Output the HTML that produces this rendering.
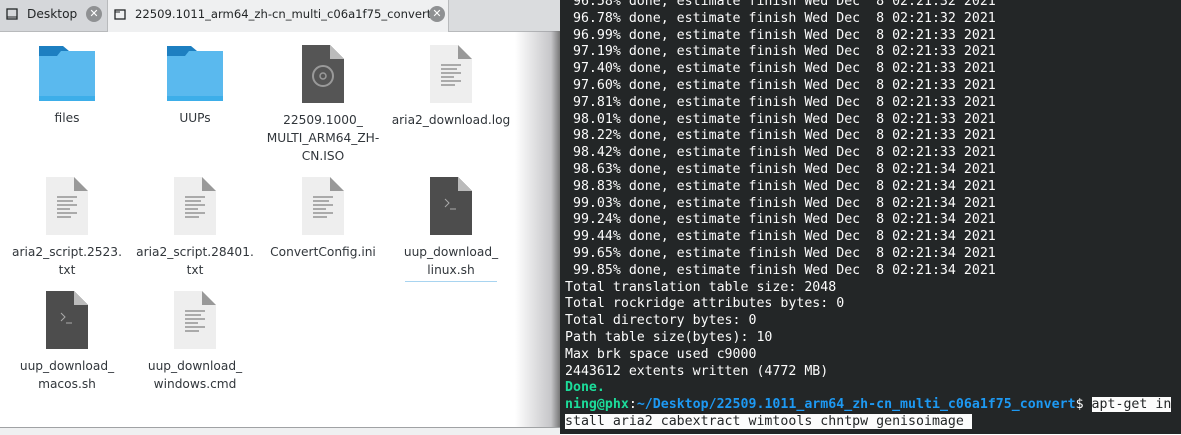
<!DOCTYPE html>
<html><head><meta charset="utf-8"><style>
body{margin:0;width:1181px;height:434px;overflow:hidden;position:relative;background:#fff;font-family:"DejaVu Sans","Liberation Sans",sans-serif}
#fm{position:absolute;left:0;top:0;width:560px;height:434px;background:#fff}
#tabs{position:absolute;left:0;top:0;width:560px;height:31px;background:#dadcde;border-bottom:1px solid #b8babc}
.tab{position:absolute;top:0;height:31px;font-size:12.2px;color:#232627;line-height:29px;white-space:nowrap}
.x{position:absolute;top:6px;width:16px;height:16px;border-radius:50%;background:#8f9193;color:#fff;font-size:11px;line-height:16px;text-align:center}
#shade{position:absolute;left:515px;top:31px;width:45px;height:396px;background:linear-gradient(90deg,rgba(255,255,255,0),rgba(160,160,165,.6) 80%,#777 100%)}
.it{position:absolute;width:128px;text-align:center;font-size:12.2px;color:#31363b;line-height:18px;white-space:nowrap}
.it svg{display:block;margin:0 auto 8px}
#term{position:absolute;left:560px;top:0;width:621px;height:434px;background:#232627;font-family:"DejaVu Sans Mono","Liberation Mono",monospace;font-size:13.25px;color:#fcfcfc;white-space:pre;line-height:16.8px}
#tt{position:absolute;left:5px;top:-6px}
.g{color:#1cdc9a;font-weight:bold}.b{color:#1d99f3;font-weight:bold}
.sel{background:#fcfcfc;color:#232627}
#bot{position:absolute;left:0;top:427px;width:560px;height:7px;background:#eff0f1;border-top:1px solid #a0a2a4}
</style></head><body>
<div id="fm">
<div id="tabs">
<div class="tab" style="left:0;width:107px;background:#d5d7da">
<svg style="position:absolute;left:6px;top:8px" width="12" height="12"><rect x="1" y="1" width="10" height="10" fill="none" stroke="#232627" stroke-width="1.3"/><line x1="1" y1="9" x2="11" y2="9" stroke="#232627"/></svg>
<span style="position:absolute;left:27px">Desktop</span><div class="x" style="left:86px">✕</div></div>
<div class="tab" style="left:107px;width:340px;background:#eff0f1;border-left:1px solid #b8babc;border-right:1px solid #b8babc;height:32px">
<svg style="position:absolute;left:6px;top:9px" width="12" height="11"><rect x="1" y="1" width="10" height="9" fill="none" stroke="#232627" stroke-width="1.3"/><line x1="1" y1="3" x2="6" y2="3" stroke="#232627"/></svg>
<span style="position:absolute;left:27px;font-size:11.6px">22509.1011_arm64_zh-cn_multi_c06a1f75_convert</span><div class="x" style="left:321px">✕</div></div>
</div>
<div id="shade"></div>

<div class="it" style="left:3px;top:46px"><svg width="56" height="55"><path d="M0 0h24l6 5h26v50H0z" fill="#1d7fc1"/><path d="M0 10h18l4-5h34v50H0z" fill="#5ab9ee"/><rect y="50" width="56" height="5" fill="#3daee9"/></svg>files</div>
<div class="it" style="left:131px;top:46px"><svg width="56" height="55"><path d="M0 0h24l6 5h26v50H0z" fill="#1d7fc1"/><path d="M0 10h18l4-5h34v50H0z" fill="#5ab9ee"/><rect y="50" width="56" height="5" fill="#3daee9"/></svg>UUPs</div>
<div class="it" style="left:259px;top:45px"><svg width="42" height="58"><path d="M0 0h28l14 14v44H0z" fill="#555"/><path d="M28 0l14 14H28z" fill="#bbb"/><circle cx="21" cy="31" r="10" fill="none" stroke="#999" stroke-width="2"/><circle cx="21" cy="31" r="3" fill="none" stroke="#999" stroke-width="1.5"/></svg>22509.1000_<br>MULTI_ARM64_ZH-<br>CN.ISO</div>
<div class="it" style="left:387px;top:45px"><svg width="42" height="58"><path d="M0 0h28l14 14v44H0z" fill="#eee"/><path d="M28 0l14 14H28z" fill="#999"/><g stroke="#666"><line x1="11" y1="20" x2="31" y2="20"/><line x1="11" y1="24" x2="27" y2="24"/><line x1="11" y1="28" x2="31" y2="28"/><line x1="11" y1="32" x2="24" y2="32"/><line x1="11" y1="36" x2="31" y2="36"/><line x1="11" y1="40" x2="25" y2="40"/></g></svg>aria2_download.log</div>

<div class="it" style="left:3px;top:177px"><svg width="42" height="58"><path d="M0 0h28l14 14v44H0z" fill="#eee"/><path d="M28 0l14 14H28z" fill="#999"/><g stroke="#666"><line x1="11" y1="20" x2="31" y2="20"/><line x1="11" y1="24" x2="27" y2="24"/><line x1="11" y1="28" x2="31" y2="28"/><line x1="11" y1="32" x2="24" y2="32"/><line x1="11" y1="36" x2="31" y2="36"/><line x1="11" y1="40" x2="25" y2="40"/></g></svg>aria2_script.2523.<br>txt</div>
<div class="it" style="left:131px;top:177px"><svg width="42" height="58"><path d="M0 0h28l14 14v44H0z" fill="#eee"/><path d="M28 0l14 14H28z" fill="#999"/><g stroke="#666"><line x1="11" y1="20" x2="31" y2="20"/><line x1="11" y1="24" x2="27" y2="24"/><line x1="11" y1="28" x2="31" y2="28"/><line x1="11" y1="32" x2="24" y2="32"/><line x1="11" y1="36" x2="31" y2="36"/><line x1="11" y1="40" x2="25" y2="40"/></g></svg>aria2_script.28401.<br>txt</div>
<div class="it" style="left:259px;top:177px"><svg width="42" height="58"><path d="M0 0h28l14 14v44H0z" fill="#eee"/><path d="M28 0l14 14H28z" fill="#999"/><g stroke="#666"><line x1="11" y1="20" x2="31" y2="20"/><line x1="11" y1="24" x2="27" y2="24"/><line x1="11" y1="28" x2="31" y2="28"/><line x1="11" y1="32" x2="24" y2="32"/><line x1="11" y1="36" x2="31" y2="36"/><line x1="11" y1="40" x2="25" y2="40"/></g></svg>ConvertConfig.ini</div>
<div class="it" style="left:387px;top:177px"><svg width="42" height="58"><path d="M0 0h28l14 14v44H0z" fill="#4d4d4d"/><path d="M28 0l14 14H28z" fill="#bbb"/><path d="M15 22l4 4-4 4M20 32h6" fill="none" stroke="#aaa"/></svg>uup_download_<br>linux.sh<div style="height:1px;background:#a8d4f0;margin:2px 18px 0"></div></div>

<div class="it" style="left:3px;top:291px"><svg width="42" height="58"><path d="M0 0h28l14 14v44H0z" fill="#4d4d4d"/><path d="M28 0l14 14H28z" fill="#bbb"/><path d="M15 22l4 4-4 4M20 32h6" fill="none" stroke="#aaa"/></svg>uup_download_<br>macos.sh</div>
<div class="it" style="left:131px;top:291px"><svg width="42" height="58"><path d="M0 0h28l14 14v44H0z" fill="#eee"/><path d="M28 0l14 14H28z" fill="#999"/><g stroke="#666"><line x1="11" y1="20" x2="31" y2="20"/><line x1="11" y1="24" x2="27" y2="24"/><line x1="11" y1="28" x2="31" y2="28"/><line x1="11" y1="32" x2="24" y2="32"/><line x1="11" y1="36" x2="31" y2="36"/><line x1="11" y1="40" x2="25" y2="40"/></g></svg>uup_download_<br>windows.cmd</div>
<div id="bot"></div>
</div>
<div id="term"><div id="tt"> 96.58% done, estimate finish Wed Dec  8 02:21:32 2021
 96.78% done, estimate finish Wed Dec  8 02:21:32 2021
 96.99% done, estimate finish Wed Dec  8 02:21:33 2021
 97.19% done, estimate finish Wed Dec  8 02:21:33 2021
 97.40% done, estimate finish Wed Dec  8 02:21:33 2021
 97.60% done, estimate finish Wed Dec  8 02:21:33 2021
 97.81% done, estimate finish Wed Dec  8 02:21:33 2021
 98.01% done, estimate finish Wed Dec  8 02:21:33 2021
 98.22% done, estimate finish Wed Dec  8 02:21:33 2021
 98.42% done, estimate finish Wed Dec  8 02:21:33 2021
 98.63% done, estimate finish Wed Dec  8 02:21:34 2021
 98.83% done, estimate finish Wed Dec  8 02:21:34 2021
 99.03% done, estimate finish Wed Dec  8 02:21:34 2021
 99.24% done, estimate finish Wed Dec  8 02:21:34 2021
 99.44% done, estimate finish Wed Dec  8 02:21:34 2021
 99.65% done, estimate finish Wed Dec  8 02:21:34 2021
 99.85% done, estimate finish Wed Dec  8 02:21:34 2021
Total translation table size: 2048
Total rockridge attributes bytes: 0
Total directory bytes: 0
Path table size(bytes): 10
Max brk space used c9000
2443612 extents written (4772 MB)
<span class="g">Done.</span>
<span class="g">ning@phx</span>:<span class="b">~/Desktop/22509.1011_arm64_zh-cn_multi_c06a1f75_convert</span>$ <span class="sel">apt-get in</span>
<span class="sel">stall aria2 cabextract wimtools chntpw genisoimage </span></div></div>
</body></html>
